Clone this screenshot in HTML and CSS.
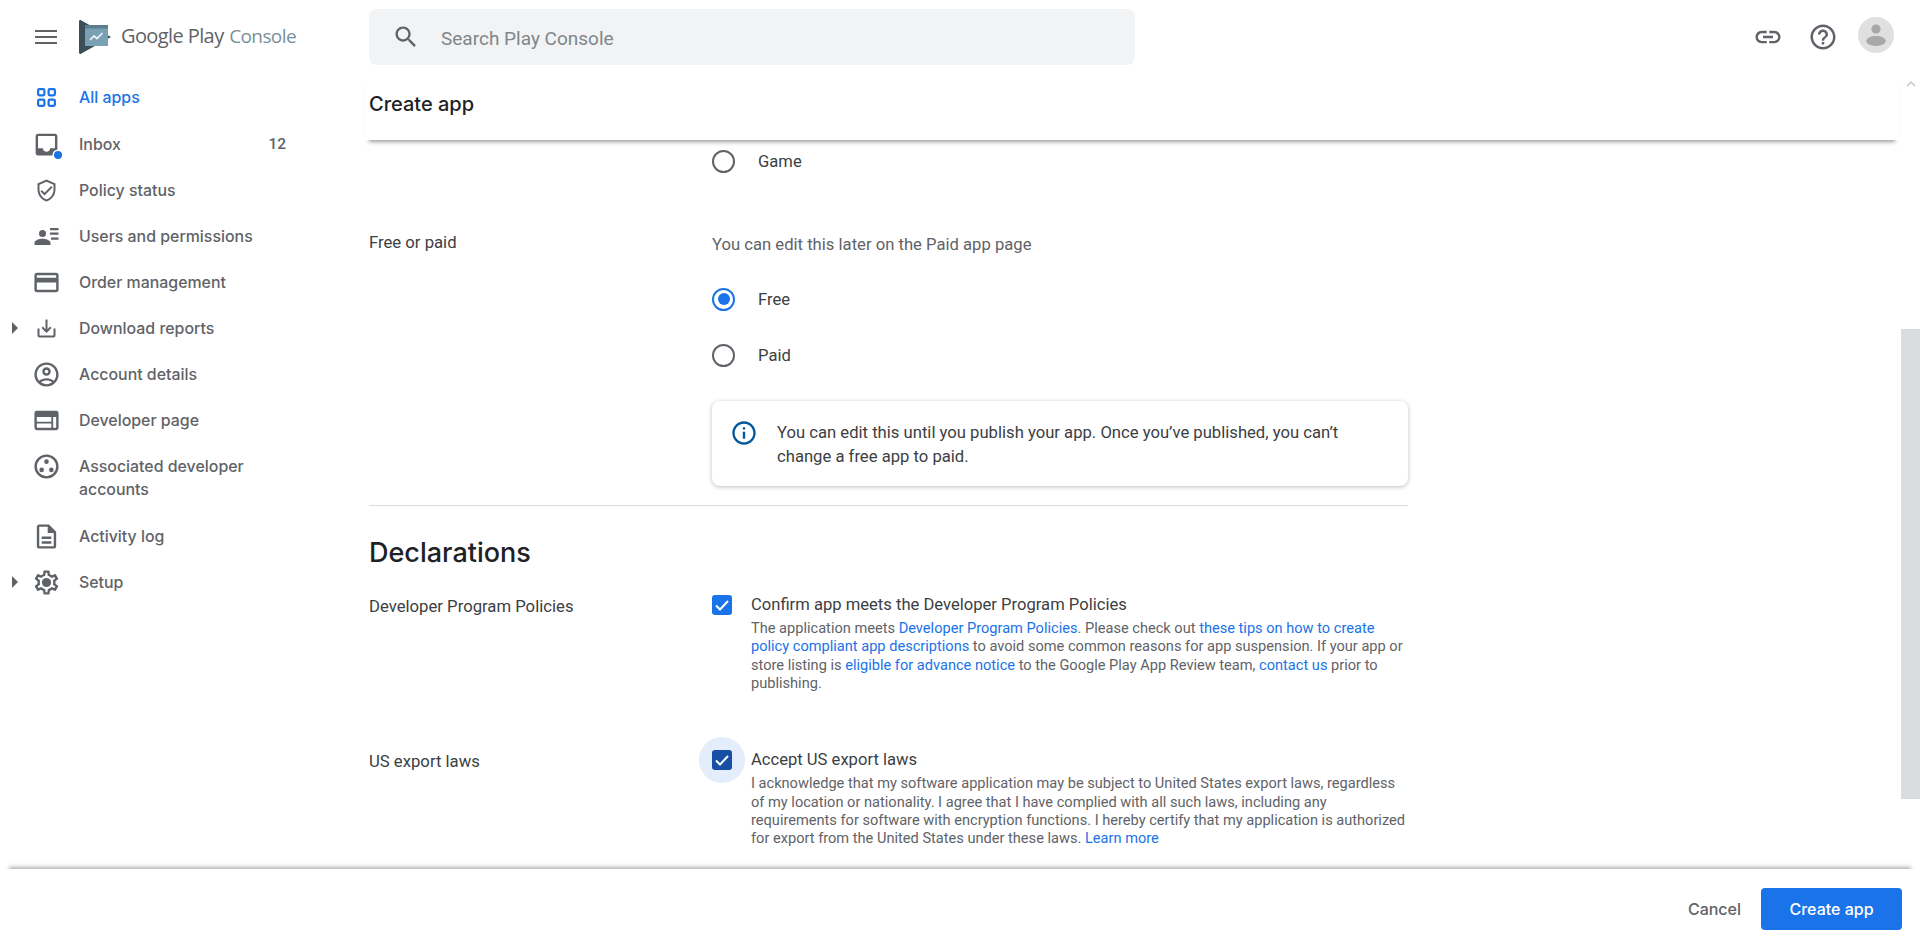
FILE: index.html
```html
<!DOCTYPE html>
<html lang="en">
<head>
<meta charset="utf-8">
<title>Create app - Google Play Console</title>
<link rel="stylesheet" href="styles.css">
</head>
<body>
<div class="app">
  <aside class="sidebar">
    <div class="brand">
      <svg class="menu" viewBox="0 0 22 14"><path d="M0 0h22v2H0zM0 6h22v2H0zM0 12h22v2H0z"/></svg>
      <svg class="logo" viewBox="0 0 32 34">
        <path fill="#3c4e57" d="M0 1.500C0 .3 1 -.3 2 .3L32 17 2 33.700C1 34.300 0 33.700 0 32.500z"/>
        <path fill="#7aa0b3" d="M6 5h23v21H6z"/>
        <path fill="#5b7f90" d="M6 5h23v3.500H6z"/>
        <path fill="none" stroke="#eef3f5" stroke-width="1.700" d="M11 20l4-4 3 2.500 5.500-5.500"/>
      </svg>
      <span class="wordmark">Google Play <span class="console">Console</span></span>
    </div>
    <nav class="nav">
      <a class="item active"><span class="caret"></span><svg class="ico" viewBox="0 0 29 29"><g fill="none" stroke="currentColor" stroke-width="2.200"><rect x="6.100" y="6.100" width="6.300" height="6.300" rx="1.300"/><rect x="16.600" y="6.100" width="6.300" height="6.300" rx="1.300"/><rect x="6.100" y="16.600" width="6.300" height="6.300" rx="1.300"/><rect x="16.600" y="16.600" width="6.300" height="6.300" rx="1.300"/></g></svg><span class="label">All apps</span></a>
      <a class="item"><span class="caret"></span><span class="icon-wrap"><svg class="ico" viewBox="0 0 24 24"><path d="M19 3H4.990c-1.110 0-1.980.89-1.980 2L3 19c0 1.100.88 2 1.990 2H19c1.100 0 2-.9 2-2V5c0-1.110-.9-2-2-2zm0 12h-4c0 1.660-1.350 3-3 3s-3-1.340-3-3H4.990V5H19v10z"/></svg><span class="dot"></span></span><span class="label">Inbox</span><span class="count">12</span></a>
      <a class="item"><span class="caret"></span><svg class="ico small" viewBox="0 0 24 24"><path d="M12 1L3 5v6c0 5.550 3.840 10.740 9 12 5.160-1.260 9-6.450 9-12V5l-9-4zm7 10c0 4.520-2.980 8.690-7 9.930-4.020-1.240-7-5.410-7-9.930V6.300l7-3.110 7 3.110V11zm-11.590.59L6 13l4 4 8-8-1.410-1.420L10 14.170z"/></svg><span class="label">Policy status</span></a>
      <a class="item"><span class="caret"></span><svg class="ico" viewBox="0 0 29 29"><circle cx="10.500" cy="11.500" r="3.500"/><path d="M2.500 23v-2.200c0-2.500 5-4 8-4s8 1.500 8 4V23zM18 6h8.500v2.200H18zM18 10.500h8.500v2.200H18zM19 15.500h7.500v2.200H19z"/></svg><span class="label">Users and permissions</span></a>
      <a class="item"><span class="caret"></span><svg class="ico" viewBox="0 0 24 24"><path d="M20 4H4c-1.110 0-1.990.89-1.990 2L2 18c0 1.110.89 2 2 2h16c1.110 0 2-.89 2-2V6c0-1.110-.89-2-2-2zm0 14H4v-6h16v6zm0-10H4V6h16v2z"/></svg><span class="label">Order management</span></a>
      <a class="item"><span class="caret on"></span><svg class="ico small" viewBox="0 0 24 24"><path d="M19 12v7H5v-7H3v7c0 1.100.9 2 2 2h14c1.100 0 2-.9 2-2v-7h-2zm-6 .67l2.590-2.580L17 11.500l-5 5-5-5 1.410-1.410L11 12.670V3h2z"/></svg><span class="label">Download reports</span></a>
      <a class="item"><span class="caret"></span><svg class="ico" viewBox="0 0 24 24"><path d="M12 2C6.480 2 2 6.480 2 12s4.480 10 10 10 10-4.480 10-10S17.520 2 12 2zM7.350 18.500C8.660 17.560 10.260 17 12 17s3.340.56 4.650 1.500c-1.310.94-2.910 1.500-4.650 1.500s-3.340-.56-4.650-1.500zm10.790-1.380C16.450 15.800 14.320 15 12 15s-4.450.8-6.140 2.120C4.700 15.730 4 13.950 4 12c0-4.420 3.580-8 8-8s8 3.580 8 8c0 1.950-.7 3.730-1.860 5.120zM12 6c-1.930 0-3.500 1.570-3.500 3.500S10.070 13 12 13s3.500-1.570 3.500-3.500S13.930 6 12 6zm0 5c-.83 0-1.500-.67-1.500-1.500S11.170 8 12 8s1.500.67 1.500 1.500S12.830 11 12 11z"/></svg><span class="label">Account details</span></a>
      <a class="item"><span class="caret"></span><svg class="ico" viewBox="0 0 24 24"><path fill-rule="evenodd" d="M4 4h16a2 2 0 012 2v12a2 2 0 01-2 2H4a2 2 0 01-2-2V6a2 2 0 012-2zm0 5v4h12V9zm0 5.500V18h12v-3.500zM17.500 9v9H20V9z"/></svg><span class="label">Developer page</span></a>
      <a class="item tall"><span class="caret"></span><svg class="ico" viewBox="0 0 24 24"><circle cx="12" cy="12" r="9" fill="none" stroke="currentColor" stroke-width="2"/><circle cx="12" cy="8" r="1.900"/><circle cx="8" cy="14.800" r="1.900"/><circle cx="16" cy="14.800" r="1.900"/></svg><span class="label">Associated developer accounts</span></a>
      <a class="item"><span class="caret"></span><svg class="ico" viewBox="0 0 24 24"><path d="M8 16h8v2H8zm0-4h8v2H8zm6-10H6c-1.100 0-2 .9-2 2v16c0 1.100.89 2 1.990 2H18c1.100 0 2-.9 2-2V8l-6-6zm4 18H6V4h7v5h5v11z"/></svg><span class="label">Activity log</span></a>
      <a class="item"><span class="caret on"></span><svg class="ico" viewBox="0 0 24 24"><path d="M19.430 12.980c.04-.32.07-.64.07-.98 0-.34-.03-.66-.07-.98l2.110-1.650c.19-.15.24-.42.12-.64l-2-3.460c-.09-.16-.26-.25-.44-.25-.06 0-.12.01-.17.03l-2.490 1c-.52-.4-1.080-.73-1.690-.98l-.38-2.650C14.460 2.180 14.250 2 14 2h-4c-.25 0-.46.18-.49.42l-.38 2.650c-.61.25-1.170.59-1.690.98l-2.490-1c-.06-.02-.12-.03-.18-.03-.17 0-.34.09-.43.25l-2 3.460c-.13.22-.07.49.12.64l2.110 1.650c-.04.32-.07.65-.07.98 0 .33.03.66.07.98l-2.110 1.650c-.19.15-.24.42-.12.64l2 3.460c.09.16.26.25.44.25.06 0 .12-.01.17-.03l2.490-1c.52.4 1.080.73 1.690.98l.38 2.650c.03.24.24.42.49.42h4c.25 0 .46-.18.49-.42l.38-2.650c.61-.25 1.170-.59 1.690-.98l2.490 1c.06.02.12.03.18.03.17 0 .34-.09.43-.25l2-3.460c.12-.22.07-.49-.12-.64l-2.110-1.650zm-1.980-1.710c.04.31.05.52.05.73 0 .21-.02.43-.05.73l-.14 1.130.89.7 1.080.84-.7 1.210-1.270-.51-1.040-.42-.9.68c-.43.32-.84.56-1.250.73l-1.060.43-.16 1.130-.2 1.350h-1.400l-.19-1.350-.16-1.130-1.060-.43c-.43-.18-.83-.41-1.230-.71l-.91-.7-1.060.43-1.270.51-.7-1.210 1.080-.84.89-.7-.14-1.130c-.03-.31-.05-.54-.05-.74s.02-.43.05-.73l.14-1.130-.89-.7-1.080-.84.7-1.210 1.270.51 1.040.42.9-.68c.43-.32.84-.56 1.250-.73l1.060-.43.16-1.130.2-1.350h1.390l.19 1.350.16 1.130 1.060.43c.43.18.83.41 1.230.71l.91.7 1.060-.43 1.270-.51.7 1.210-1.070.85-.89.7.14 1.130z"/><circle cx="12" cy="12" r="3.800"/></svg><span class="label">Setup</span></a>
    </nav>
  </aside>
  <main class="main">
    <header class="topbar">
      <div class="search">
        <svg class="search-ico" viewBox="0 0 24 24"><path d="M15.500 14h-.79l-.28-.27C15.410 12.590 16 11.110 16 9.500 16 5.910 13.090 3 9.500 3S3 5.910 3 9.500 5.910 16 9.500 16c1.610 0 3.090-.59 4.230-1.570l.27.28v.79l5 4.990L20.490 19l-4.990-5zm-6 0C7.010 14 5 11.990 5 9.500S7.010 5 9.500 5 14 7.010 14 9.500 11.990 14 9.500 14z"/></svg>
        <span class="placeholder">Search Play Console</span>
      </div>
      <div class="actions">
        <svg class="act" viewBox="0 0 24 24"><path d="M3.900 12c0-1.710 1.390-3.100 3.100-3.100h4V7H7c-2.760 0-5 2.240-5 5s2.240 5 5 5h4v-1.900H7c-1.710 0-3.100-1.390-3.100-3.100zM8 13h8v-2H8v2zm9-6h-4v1.900h4c1.710 0 3.100 1.390 3.100 3.100s-1.390 3.100-3.100 3.100h-4V17h4c2.760 0 5-2.240 5-5s-2.240-5-5-5z"/></svg>
        <svg class="act help" viewBox="0 0 24 24"><path d="M11 18h2v-2h-2v2zm1-16C6.480 2 2 6.480 2 12s4.480 10 10 10 10-4.480 10-10S17.520 2 12 2zm0 18c-4.410 0-8-3.590-8-8s3.590-8 8-8 8 3.590 8 8-3.590 8-8 8zm0-14c-2.210 0-4 1.790-4 4h2c0-1.100.9-2 2-2s2 .9 2 2c0 2-3 1.750-3 5h2c0-2.250 3-2.500 3-5 0-2.210-1.790-4-4-4z"/></svg>
        <svg class="avatar" viewBox="0 0 36 36"><circle cx="18" cy="18" r="18" fill="#e0e0e0"/><circle cx="18" cy="12" r="4.600" fill="#a8a8a8"/><ellipse cx="18" cy="24" rx="9.800" ry="5" fill="#a8a8a8"/></svg>
      </div>
    </header>
    <svg class="scroll-up" viewBox="0 0 10 7"><path d="M1 6l4-4 4 4" fill="none" stroke="#d0d0d0" stroke-width="1.800"/></svg>
    <div class="page-title"><h1>Create app</h1></div>
    <div class="scroller">
      <div class="form">
        <div class="radio-row first"><span class="spacer"></span><span class="radio"></span><span class="radio-text">Game</span></div>
        <section class="row free">
          <div class="row-label">Free or paid</div>
          <div class="row-body">
            <p class="hint">You can edit this later on the Paid app page</p>
            <div class="radio-line"><span class="radio checked"></span><span class="radio-text">Free</span></div>
            <div class="radio-line"><span class="radio"></span><span class="radio-text">Paid</span></div>
            <div class="notice">
              <svg class="info" viewBox="0 0 24 24"><path d="M11 7h2v2h-2zm0 4h2v6h-2zm1-9C6.480 2 2 6.480 2 12s4.480 10 10 10 10-4.480 10-10S17.520 2 12 2zm0 18c-4.410 0-8-3.590-8-8s3.590-8 8-8 8 3.590 8 8-3.590 8-8 8z"/></svg>
              <p>You can edit this until you publish your app. Once you’ve published, you can’t change a free app to paid.</p>
            </div>
          </div>
        </section>
        <hr class="divider">
        <h2 class="section-title">Declarations</h2>
        <section class="row decl">
          <div class="row-label">Developer Program Policies</div>
          <div class="check-body">
            <span class="check"><svg viewBox="0 0 20 20"><path d="M4 10.500l4 4 8-8.500" fill="none" stroke="#fff" stroke-width="2"/></svg></span>
            <div class="check-text">
              <div class="check-title">Confirm app meets the Developer Program Policies</div>
              <p class="check-desc">The application meets <a>Developer Program Policies</a>. Please check out <a>these tips on how to create policy compliant app descriptions</a> to avoid some common reasons for app suspension. If your app or store listing is <a>eligible for advance notice</a> to the Google Play App Review team, <a>contact us</a> prior to publishing.</p>
            </div>
          </div>
        </section>
        <section class="row decl second">
          <div class="row-label">US export laws</div>
          <div class="check-body">
            <span class="check focused"><svg viewBox="0 0 20 20"><path d="M4 10.500l4 4 8-8.500" fill="none" stroke="#fff" stroke-width="2"/></svg></span>
            <div class="check-text">
              <div class="check-title">Accept US export laws</div>
              <p class="check-desc">I acknowledge that my software application may be subject to United States export laws, regardless of my location or nationality. I agree that I have complied with all such laws, including any requirements for software with encryption functions. I hereby certify that my application is authorized for export from the United States under these laws. <a>Learn more</a></p>
            </div>
          </div>
        </section>
      </div>
      <div class="scroll-track">
        <div class="scroll-thumb"></div>
      </div>
    </div>
  </main>
  <footer class="footer">
    <button class="btn-text">Cancel</button>
    <button class="btn-primary">Create app</button>
  </footer>
</div>
</body>
</html>
```
FILE: styles.css
```css
* { box-sizing: border-box; }
html, body { margin: 0; height: 100%; overflow: hidden; background: #fff; }
body { font-family: Roboto, "Liberation Sans", sans-serif; color: #3c4043; }
p, h1, h2 { margin: 0; }

.app { display: grid; grid-template-columns: 360px minmax(0, 1fr); grid-template-rows: 869px 79px; height: 948px; }

/* Sidebar */
.sidebar { min-height: 0; }
.brand { display: flex; align-items: center; height: 74px; padding-left: 35px; }
.menu { width: 22px; height: 14px; fill: #5f6368; }
.logo { width: 32px; height: 34px; margin-left: 22px; margin-top: -1px; flex: none; }
.wordmark { margin-left: 10px; font-family: "Open Sans", sans-serif; font-size: 20px; letter-spacing: -0.6px; color: #5f6368; margin-top: -4px; }
.console { color: #78909c; margin-left: 1px; font-size: 19px; }

.nav { display: flex; flex-direction: column; }
.item { display: flex; align-items: center; height: 46px; padding-left: 12px; padding-right: 74px; color: #5f6368; font-family: Inter, sans-serif; font-size: 15.900px; font-weight: 500; flex: none; }
.item.active { height: 47px; color: #1a73e8; }
.item.tall { height: 69px; align-items: flex-start; padding-top: 9px; margin-bottom: 1px; }
.item.tall .label { padding-top: 3px; }
.caret { width: 20px; flex: none; display: flex; align-items: center; }
.caret.on::before { content: ""; border-left: 6px solid #5f6368; border-top: 6px solid transparent; border-bottom: 6px solid transparent; }
.ico { width: 29px; height: 29px; fill: currentColor; flex: none; }
.ico.small { padding: 2.500px; }
.icon-wrap { position: relative; width: 29px; height: 29px; flex: none; }
.dot { position: absolute; right: -1px; bottom: 0; width: 8px; height: 8px; border-radius: 50%; background: #1a73e8; box-shadow: 0 0 0 1.500px #fff; }
.label { margin-left: 18px; line-height: 23px; flex: 1; }
.count { font-family: Roboto, sans-serif; color: #5f6368; font-size: 15.500px; }

/* Main */
.main { position: relative; min-width: 0; display: flex; flex-direction: column; min-height: 0; }
.topbar { display: flex; align-items: flex-start; height: 72px; padding: 9px 26px 0 9px; justify-content: space-between; flex: none; }
.search { width: 766px; height: 56px; background: #f1f3f4; border-radius: 8px; display: flex; align-items: center; padding-left: 23px; }
.search-ico { width: 28px; height: 28px; fill: #5f6368; flex: none; }
.placeholder { margin-left: 21px; margin-top: 2px; font-size: 19px; color: #80868b; }
.actions { display: flex; align-items: center; height: 56px; }
.act { width: 30px; height: 30px; fill: #5f6368; margin-right: 25px; margin-top: -1px; }
.act.help { margin-right: 20px; }
.avatar { width: 36px; height: 36px; margin-top: -5px; }
.scroll-up { position: absolute; top: 80px; right: 4px; width: 10px; height: 7px; }

.page-title { height: 68px; margin-left: 5px; margin-right: 21px; padding-left: 4px; display: flex; align-items: center; box-shadow: 0 6px 4px -4px rgba(60,64,67,.5); position: relative; z-index: 2; background: #fff; flex: none; }
.page-title h1 { font-family: Inter, sans-serif; font-size: 20px; font-weight: 500; color: #202124; margin-top: -5px; }

.scroller { flex: 1; min-height: 0; display: flex; overflow: hidden; }
.form { width: 1048px; padding-left: 9px; flex: none; }
.scroll-track { margin-left: auto; width: 19px; position: relative; flex: none; }
.scroll-thumb { position: absolute; left: 0; right: 0; top: 189px; height: 470px; background: #dadce0; }

.radio-row.first { display: flex; align-items: center; height: 42px; }
.spacer { width: 343px; flex: none; }
.radio { width: 23px; height: 23px; border: 2px solid #5f6368; border-radius: 50%; flex: none; display: block; position: relative; }
.radio.checked { border-color: #1a73e8; }
.radio.checked::after { content: ""; position: absolute; inset: 3.500px; background: #1a73e8; border-radius: 50%; }
.radio-text { margin-left: 23px; font-size: 16.600px; color: #3c4043; }

.row { display: grid; grid-template-columns: 343px 1fr; }
.row.free { margin-top: 50px; }
.row-label { font-size: 16.700px; line-height: 22px; color: #3c4043; }
.hint { font-size: 16.650px; line-height: 24px; color: #5f6368; margin-top: 1px; margin-bottom: 14px; }
.radio-line { display: flex; align-items: center; height: 56px; }
.notice { margin-top: 18px; height: 85px; width: 696px; border-radius: 8px; background: #fff; box-shadow: 0 1px 4px rgba(60,64,67,.35); padding: 20px 40px 0 18px; display: flex; }
.notice p { font-size: 16.650px; line-height: 24px; color: #3c4043; margin-left: 19px; }
.info { width: 28px; height: 28px; fill: #01579b; flex: none; margin-top: -2px; }

.divider { border: 0; border-top: 1px solid #dadce0; margin: 19px 0 0; }
.section-title { font-family: Inter, sans-serif; font-weight: 500; font-size: 27px; line-height: 36px; color: #202124; margin-top: 29px; }

.row.decl { margin-top: 23px; }
.row.decl .row-label { margin-top: 2px; }
.row.second { margin-top: 57px; }
.check-body { display: flex; }
.check { position: relative; isolation: isolate; width: 20px; height: 20px; flex: none; display: block; margin-top: 1px; }
.check svg { display: block; width: 20px; height: 20px; border-radius: 3px; background: #1a73e8; }
.check.focused svg { background: #174ea6; }
.check.focused::before { content: ""; position: absolute; left: -13px; top: -13px; width: 46px; height: 46px; border-radius: 50%; background: #e3edfb; z-index: -1; }
.check-text { margin-left: 19px; width: 657px; }
.check-title { font-size: 16.600px; line-height: 20px; color: #3c4043; margin-top: 1px; }
.check-desc { font-size: 14.600px; line-height: 18.330px; color: #5f6368; margin-top: 4px; }
.check-desc a { color: #1a73e8; }

/* Footer */
.footer { grid-column: 1 / -1; display: flex; align-items: center; justify-content: flex-end; gap: 20px; margin: 0 5px; box-shadow: 0 -6px 4px -4px rgba(60,64,67,.4); background: #fff; position: relative; z-index: 2; padding-right: 13px; }
.btn-text { border: 0; background: none; font-family: Inter, sans-serif; font-weight: 500; font-size: 16px; color: #5f6368; padding: 0; }
.btn-primary { width: 141px; height: 42px; border: 0; border-radius: 4px; background: #1a73e8; color: #fff; font-family: Inter, sans-serif; font-weight: 500; font-size: 16px; }
```
